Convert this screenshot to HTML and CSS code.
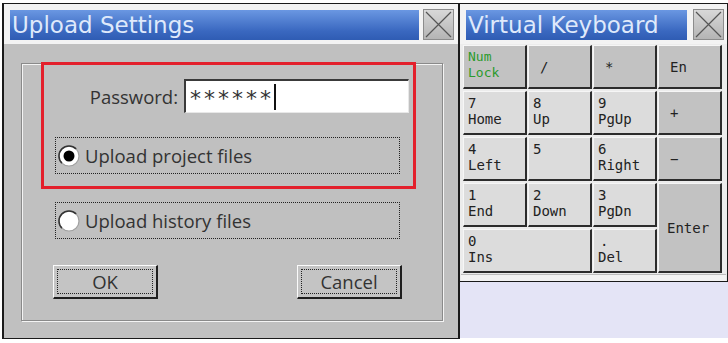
FILE: index.html
```html
<!DOCTYPE html>
<html>
<head>
<meta charset="utf-8">
<link rel="stylesheet" href="styles.css">
</head>
<body>
<div class="dlg">
  <div class="titlearea">
    <div class="titlebar">Upload Settings</div>
    <div class="closebtn"><svg width="29" height="29" viewBox="0 0 29 29"><path d="M2 2 L27 27 M27 2 L2 27" stroke="#555" stroke-width="1.2" fill="none"/></svg></div>
  </div>
  <div class="dbody">
    <div class="group">
      <div class="redbox">
        <div class="pwrow">
          <span class="pwlabel">Password:</span>
          <div class="pwinput"><span class="stars">******</span><span class="caret"></span></div>
        </div>
        <div class="radio r1">
          <svg class="rdot" width="22" height="22" viewBox="0 0 22 22"><circle cx="11" cy="11" r="10" fill="#fff" stroke="#a0a0a0" stroke-width="1.2"/><path d="M3.9 18.1 A10 10 0 0 1 18.1 3.9" stroke="#333" stroke-width="1.5" fill="none"/><circle cx="11" cy="11" r="5.5" fill="#000"/></svg>
          <span>Upload project files</span>
        </div>
      </div>
      <div class="radio r2">
        <svg class="rdot" width="22" height="22" viewBox="0 0 22 22"><circle cx="11" cy="11" r="10" fill="#fff" stroke="#a0a0a0" stroke-width="1.2"/><path d="M3.9 18.1 A10 10 0 0 1 18.1 3.9" stroke="#333" stroke-width="1.5" fill="none"/></svg>
        <span>Upload history files</span>
      </div>
      <div class="btnrow">
        <div class="btn ok"><div class="focus">OK</div></div>
        <div class="btn cancel"><div class="focus">Cancel</div></div>
      </div>
    </div>
  </div>
</div>
<div class="rightcol">
  <div class="kbd">
    <div class="titlearea kt">
      <div class="titlebar">Virtual Keyboard</div>
      <div class="closebtn"><svg width="29" height="29" viewBox="0 0 29 29"><path d="M2 2 L27 27 M27 2 L2 27" stroke="#555" stroke-width="1.2" fill="none"/></svg></div>
    </div>
    <div class="keys">
      <div class="key dark single green">Num<br>Lock</div>
      <div class="key dark mid">/</div>
      <div class="key dark mid">*</div>
      <div class="key dark mid">En</div>
      <div class="key">7<br>Home</div>
      <div class="key">8<br>Up</div>
      <div class="key">9<br>PgUp</div>
      <div class="key dark mid">+</div>
      <div class="key">4<br>Left</div>
      <div class="key">5</div>
      <div class="key">6<br>Right</div>
      <div class="key dark mid">&minus;</div>
      <div class="key">1<br>End</div>
      <div class="key">2<br>Down</div>
      <div class="key">3<br>PgDn</div>
      <div class="key dark mid enter">Enter</div>
      <div class="key zero">0<br>Ins</div>
      <div class="key del"><span class="dot">.</span><br>Del</div>
    </div>
    <div class="hscroll"></div>
  </div>
  <div class="lav"></div>
</div>
</body>
</html>
```

FILE: styles.css
```css
html, body {
  margin: 0;
  padding: 0;
  background: #fff;
}
body {
  display: flex;
  align-items: flex-start;
  width: 728px;
  height: 343px;
  overflow: hidden;
  font-family: "Open Sans", "DejaVu Sans", sans-serif;
}
.dlg {
  margin-left: 2px;
  margin-top: 3px;
  width: 458px;
  height: 336px;
  box-sizing: border-box;
  border: 1px solid #1a1a1a;
  border-left-width: 2px;
  border-right-width: 2px;
  display: flex;
  flex-direction: column;
  background: #c0c0c0;
}
.titlearea {
  display: flex;
  align-items: center;
  padding: 5px 4px 4px 6px;
  background: #f3f3f3;
}
.titlebar {
  flex: 1;
  height: 30px;
  background: linear-gradient(#6a97e2, #3a68c0 70%, #2f5cb3);
  color: #dfe9fb;
  font-family: "DejaVu Sans", sans-serif;
  font-size: 23px;
  line-height: 31px;
  padding-left: 2px;
  white-space: nowrap;
  overflow: hidden;
}
.closebtn {
  width: 29px;
  height: 29px;
  margin-left: 4px;
  border: 1px solid #8c8c8c;
  background: linear-gradient(#d8d8d8, #b4b4b4);
}
.closebtn svg { display: block; }
.dbody {
  flex: 1;
  padding: 19px 15px 17px 17px;
  display: flex;
}
.group {
  flex: 1;
  border: 1px solid #8a8a8a;
  box-shadow: 1px 1px 0 #f4f4f4, inset 1px 1px 0 #f4f4f4;
  display: flex;
  flex-direction: column;
  align-items: flex-start;
}
.redbox {
  margin-top: -2px;
  margin-left: 19px;
  width: 375px;
  height: 127px;
  box-sizing: border-box;
  border: 3px solid #e3202c;
  display: flex;
  flex-direction: column;
  align-items: flex-start;
}
.pwrow {
  margin-top: 14px;
  display: flex;
  align-items: center;
  height: 34px;
}
.pwlabel {
  width: 134px;
  text-align: right;
  margin-right: 6px;
  font-size: 18.5px;
  color: #333;
}
.pwinput {
  width: 225px;
  height: 34px;
  box-sizing: border-box;
  background: #fff;
  border-top: 2px solid #3a3a3a;
  border-left: 2px solid #3a3a3a;
  border-right: 1px solid #e8e8e8;
  border-bottom: 1px solid #e8e8e8;
  display: flex;
  align-items: center;
  padding-left: 4px;
}
.stars {
  font-family: "DejaVu Sans", sans-serif;
  font-size: 22px;
  letter-spacing: 3px;
  color: #333;
  line-height: 1;
  margin-top: 4px;
}
.caret {
  width: 2px;
  height: 26px;
  background: #111;
  margin-left: 0;
}
.radio {
  width: 345px;
  height: 37px;
  box-sizing: border-box;
  border: 1px dotted #222;
  display: flex;
  align-items: center;
  font-size: 18.5px;
  color: #333;
}
.rdot {
  margin-left: 2px;
  margin-right: 5px;
}
.r1 { margin-top: 24px; margin-left: 11px; }
.r2 { margin-top: 13px; margin-left: 33px; }
.btnrow {
  margin-top: 26px;
  display: flex;
}
.btn {
  width: 105px;
  height: 34px;
  box-sizing: border-box;
  border-top: 1px solid #fafafa;
  border-left: 1px solid #fafafa;
  border-right: 2px solid #1e1e1e;
  border-bottom: 2px solid #1e1e1e;
  background: #c4c4c4;
  padding: 3px;
  display: flex;
}
.focus {
  flex: 1;
  border: 1px dotted #222;
  display: flex;
  align-items: center;
  justify-content: center;
  font-size: 18.5px;
  color: #333;
}
.ok { margin-left: 31px; }
.cancel { margin-left: 139px; }

.rightcol {
  display: flex;
  flex-direction: column;
  width: 268px;
  height: 338px;
}
.kbd {
  margin-top: 3px;
  border: 1px solid #1a1a1a;
  border-left: none;
  background: #eaeaea;
}
.kt { padding-left: 6px; padding-right: 3px; }
.kt .closebtn { margin-left: 6px; }
.keys {
  display: grid;
  grid-template-columns: repeat(4, 64px);
  grid-template-rows: repeat(5, 44px);
  gap: 2px 1px;
  padding: 1px 3px 0 3px;
  background: #ececec;
}
.key {
  box-sizing: border-box;
  background: #dcdcdc;
  border-top: 1px solid #f6f6f6;
  border-left: 1px solid #f6f6f6;
  border-right: 2px solid #2c2c2c;
  border-bottom: 2px solid #2c2c2c;
  font-family: "DejaVu Sans Mono", monospace;
  font-size: 14px;
  line-height: 16px;
  color: #222;
  padding: 3px 0 0 4px;
}
.key.dark { background: #c2c2c2; }
.key.mid {
  display: flex;
  align-items: center;
  padding: 0 0 0 11px;
}
.key.green {
  color: #2b9a2b;
  font-size: 13px;
  line-height: 16px;
}
.enter {
  grid-column: 4;
  grid-row: 4 / span 2;
  padding-left: 8px !important;
}
.zero { grid-column: 1 / span 2; }
.dot { margin-left: 2px; }
.hscroll {
  height: 6px;
  margin: 1px 1px 0 1px;
  background: #f2f2f2;
  border-top: 1px solid #bdbdbd;
}
.lav {
  flex: 1;
  background: #e4e4f6;
}
```
